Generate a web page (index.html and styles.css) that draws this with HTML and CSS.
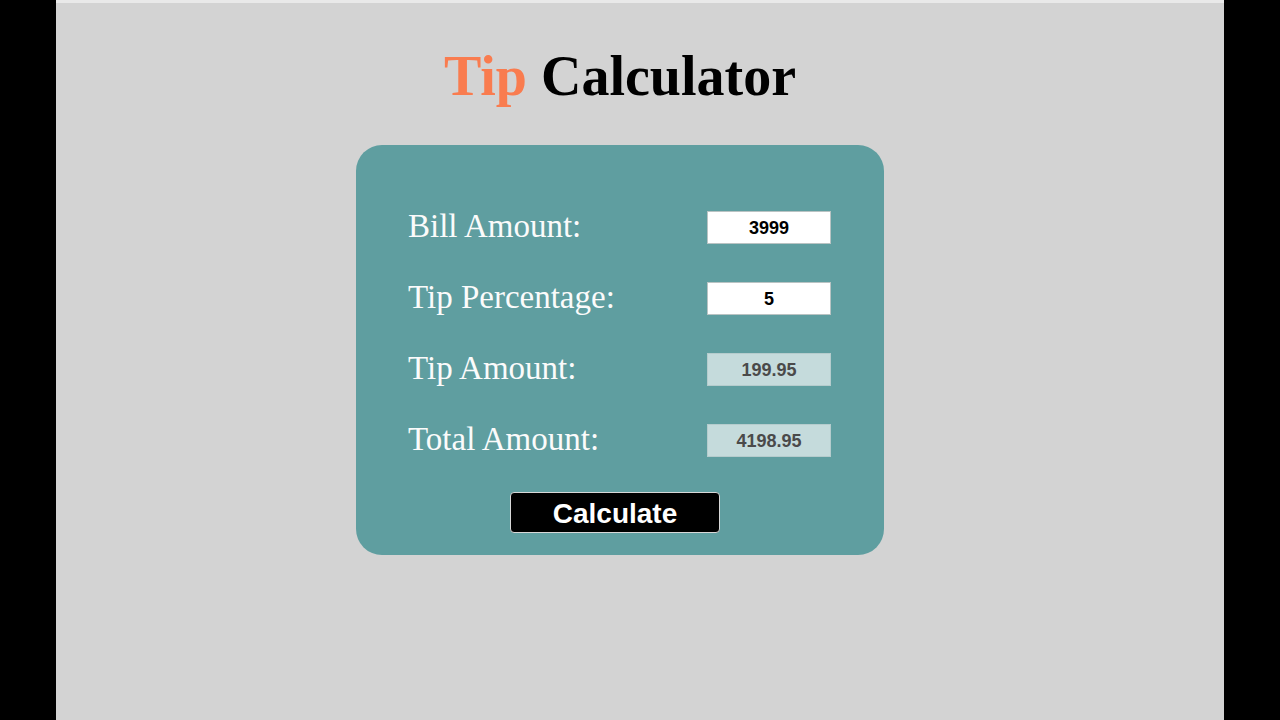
FILE: index.html
```html
<!DOCTYPE html>
<html lang="en">
<head>
<meta charset="utf-8">
<title>Tip Calculator</title>
<link rel="stylesheet" href="styles.css">
</head>
<body>
<div class="screen">
  <div class="content">
    <h1 class="title"><span class="accent">Tip</span> Calculator</h1>
    <div class="card">
      <div class="row">
        <label class="label" for="bill">Bill Amount:</label>
        <input class="field" id="bill" type="text" value="3999">
      </div>
      <div class="row">
        <label class="label" for="pct">Tip Percentage:</label>
        <input class="field" id="pct" type="text" value="5">
      </div>
      <div class="row">
        <label class="label" for="tip">Tip Amount:</label>
        <input class="field readonly" id="tip" type="text" value="199.95" readonly>
      </div>
      <div class="row">
        <label class="label" for="total">Total Amount:</label>
        <input class="field readonly" id="total" type="text" value="4198.95" readonly>
      </div>
      <button class="calc" type="button">Calculate</button>
    </div>
  </div>
</div>
</body>
</html>
```

FILE: styles.css
```css
html, body {
  margin: 0;
  padding: 0;
  background: #000;
  height: 720px;
  overflow: hidden;
}

.screen {
  width: 1168px;
  height: 717px;
  margin: 0 auto;
  background: #d3d3d3;
  border-top: 3px solid #e9e9e9;
}

.content {
  width: 1128px;
  display: flex;
  flex-direction: column;
  align-items: center;
}

.title {
  margin: 42px 0 38px;
  font-family: "Liberation Serif", "Times New Roman", serif;
  font-weight: bold;
  font-size: 56px;
  line-height: 62px;
  color: #000;
}

.accent {
  color: #f97c4f;
}

.card {
  box-sizing: border-box;
  width: 528px;
  height: 410px;
  background: #5f9ea0;
  border-radius: 26px;
  padding: 66px 53px 22px 52px;
  display: flex;
  flex-direction: column;
  gap: 38px;
}

.row {
  height: 33px;
  display: flex;
  align-items: center;
  justify-content: space-between;
}

.label {
  font-family: "Liberation Serif", "Times New Roman", serif;
  font-size: 33px;
  line-height: 33px;
  padding-bottom: 2px;
  color: #fbfbfb;
}

.field {
  box-sizing: border-box;
  width: 124px;
  height: 33px;
  margin: 0;
  padding: 2px 0 0;
  border: 1px solid #b9c3c3;
  background: #fff;
  text-align: center;
  font-family: "Liberation Sans", Arial, sans-serif;
  font-weight: bold;
  font-size: 18px;
  color: #000;
  outline: none;
}

.field.readonly {
  background: #c5dbdc;
  border-color: #b5cccd;
  color: #4a4a4a;
}

.calc {
  box-sizing: border-box;
  align-self: flex-start;
  margin: -3px 0 0 102px;
  width: 210px;
  height: 41px;
  padding: 2px 0 0;
  background: #000;
  border: 1px solid #d8d8d8;
  border-radius: 4px;
  color: #fff;
  font-family: "Liberation Sans", Arial, sans-serif;
  font-weight: bold;
  font-size: 28px;
  cursor: pointer;
}
```
